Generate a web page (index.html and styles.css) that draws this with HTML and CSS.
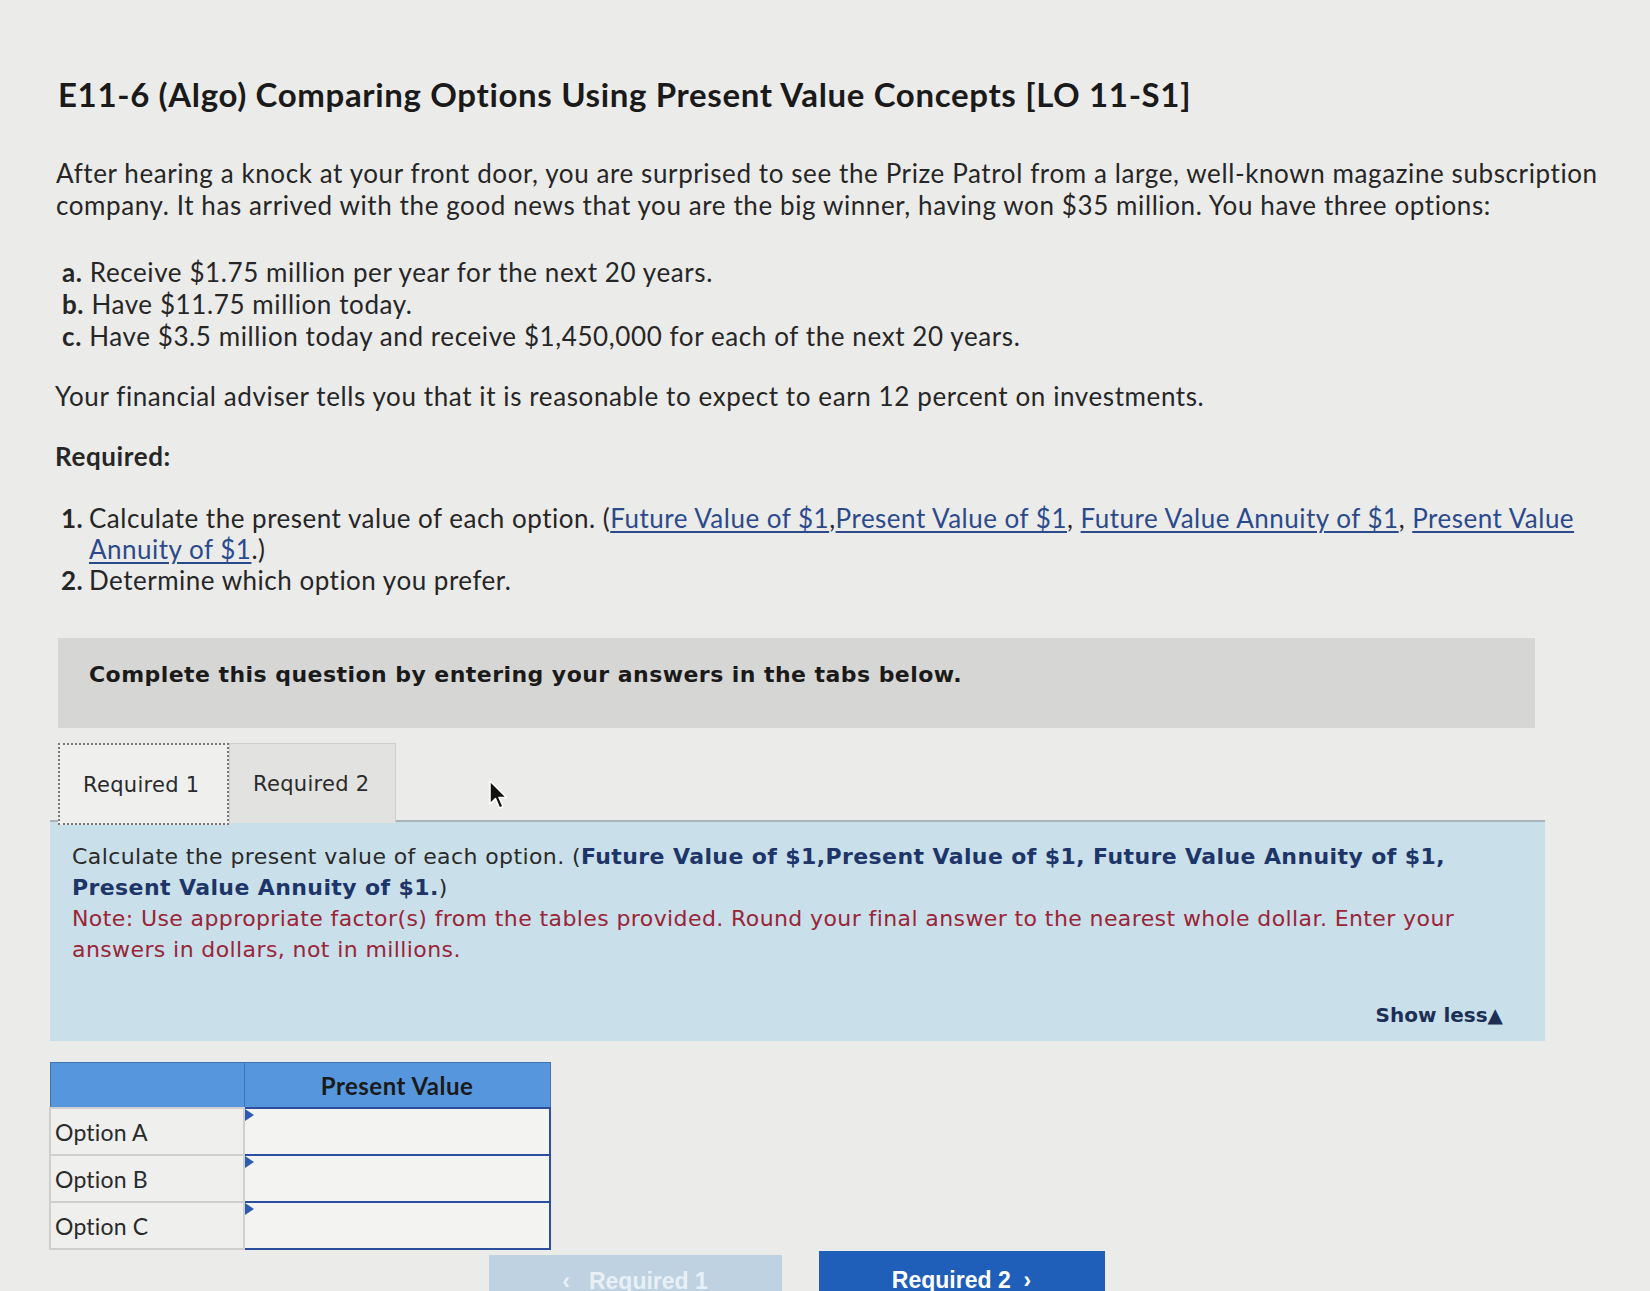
FILE: index.html
```html
<!DOCTYPE html>
<html>
<head>
<meta charset="utf-8">
<link rel="stylesheet" href="styles.css">
</head>
<body>
<div class="page">
  <h1 class="title">E11-6 (Algo) Comparing Options Using Present Value Concepts [LO 11-S1]</h1>
  <p class="intro">After hearing a knock at your front door, you are surprised to see the Prize Patrol from a large, well-known magazine subscription company. It has arrived with the good news that you are the big winner, having won $35 million. You have three options:</p>
  <ul class="options">
    <li><b>a.</b> Receive $1.75 million per year for the next 20 years.</li>
    <li><b>b.</b> Have $11.75 million today.</li>
    <li><b>c.</b> Have $3.5 million today and receive $1,450,000 for each of the next 20 years.</li>
  </ul>
  <p class="adviser">Your financial adviser tells you that it is reasonable to expect to earn 12 percent on investments.</p>
  <p class="req">Required:</p>
  <ol class="reqlist">
    <li><b class="num">1.</b><span>Calculate the present value of each option. (<a>Future Value of $1</a>,<a>Present Value of $1</a>, <a>Future Value Annuity of $1</a>, <a>Present Value Annuity of $1</a>.)</span></li>
    <li><b class="num">2.</b><span>Determine which option you prefer.</span></li>
  </ol>
  <div class="complete">Complete this question by entering your answers in the tabs below.</div>
  <div class="tabs">
    <div class="tab active">Required 1</div>
    <div class="tab">Required 2</div>
  </div>
  <div class="panel">
    <p class="ptext">Calculate the present value of each option. (<b>Future Value of $1,Present Value of $1, Future Value Annuity of $1, Present Value Annuity of $1.</b>)<br><span class="note">Note: Use appropriate factor(s) from the tables provided. Round your final answer to the nearest whole dollar. Enter your answers in dollars, not in millions.</span></p>
    <div class="showless">Show less&#9650;</div>
  </div>
  <table class="pv">
    <tr><th class="blank"></th><th>Present Value</th></tr>
    <tr><td class="lbl">Option A</td><td class="inp"><span class="mark"></span></td></tr>
    <tr><td class="lbl">Option B</td><td class="inp"><span class="mark"></span></td></tr>
    <tr><td class="lbl">Option C</td><td class="inp"><span class="mark"></span></td></tr>
  </table>
  <div class="nav">
    <div class="btn prev">&lsaquo;&nbsp;&nbsp; Required 1</div>
    <div class="btn next">Required 2 &nbsp;&rsaquo;</div>
  </div>
</div>
<svg class="cursor" width="22" height="32" viewBox="0 0 22 32"><path d="M2 1 L2 24 L7.5 18.5 L11.5 28 L15 26.5 L11 17.5 L18.5 17.5 Z" fill="#111" stroke="#fff" stroke-width="1.5" stroke-linejoin="round"/></svg>
</body>
</html>
```
FILE: styles.css
```css
html, body {
  margin: 0;
  padding: 0;
  background: #ebebea;
}
body {
  position: relative;
  height: 1291px;
  overflow: hidden;
  font-family: Lato, "Liberation Sans", sans-serif;
  color: #262626;
}
.page {
  margin-left: 58px;
  width: 1480px;
  padding-top: 75px;
}
.title {
  margin: 0;
  font-size: 33px;
  line-height: 38px;
  letter-spacing: 0.65px;
  font-weight: 700;
  color: #1a1a1a;
}
.intro {
  margin: 44px 0 0 -2px;
  font-size: 26px;
  letter-spacing: 0.6px;
  line-height: 32px;
  width: 1570px;
}
.options {
  list-style: none;
  margin: 35px 0 0 4px;
  padding: 0;
  font-size: 26px;
  letter-spacing: 0.6px;
  line-height: 32px;
}
.options b { font-weight: 700; }
.adviser {
  margin: 28px 0 0 -3px;
  font-size: 26px;
  letter-spacing: 0.6px;
  line-height: 32px;
}
.req {
  margin: 28px 0 0 -3px;
  font-size: 26px;
  letter-spacing: 0.6px;
  line-height: 32px;
  font-weight: 700;
}
.reqlist {
  list-style: none;
  margin: 31px 0 0 3px;
  padding: 0;
  width: 1545px;
  font-size: 26px;
  letter-spacing: 0.5px;
  line-height: 31px;
}
.reqlist li {
  display: flex;
}
.reqlist .num {
  width: 28px;
  flex: none;
}
.reqlist a {
  color: #2b4a8c;
  text-decoration: underline;
  text-underline-offset: 3px;
}
.complete {
  margin-top: 42px;
  height: 90px;
  width: 1477px;
  box-sizing: border-box;
  padding: 24px 0 0 31px;
  background: #d6d6d5;
  font-family: "DejaVu Sans", Verdana, sans-serif;
  font-weight: 700;
  font-size: 22px;
  letter-spacing: 0.45px;
  color: #1a1a1a;
}
.tabs {
  display: flex;
  margin-top: 15px;
  position: relative;
  z-index: 1;
}
.tab {
  height: 80px;
  box-sizing: border-box;
  padding: 28px 0 0 23px;
  font-family: "DejaVu Sans", Verdana, sans-serif;
  font-size: 21px;
  letter-spacing: 0.3px;
  color: #2a2a2a;
}
.tab.active {
  width: 171px;
  background: #efefee;
  border: 2px dotted #777;
  height: 82px;
}
.tab:not(.active) {
  width: 167px;
  background: #e2e2e1;
  border: 1px solid #cfcfcf;
  border-bottom: none;
}
.panel {
  margin: -5px 0 0 -8px;
  width: 1495px;
  height: 221px;
  box-sizing: border-box;
  background: #c9dfe9;
  border-top: 2px solid #a9b3b8;
  padding: 19px 42px 0 22px;
  font-family: "DejaVu Sans", Verdana, sans-serif;
  font-size: 22px;
  letter-spacing: 0.4px;
  color: #2a2a2a;
}
.ptext {
  margin: 0;
  line-height: 31px;
}
.ptext b { color: #1d3568; }
.note { color: #9a2438; }
.showless {
  text-align: right;
  margin-top: 38px;
  font-weight: 700;
  font-size: 20px;
  letter-spacing: 0;
  color: #1d2f55;
}
.pv {
  margin: 21px 0 0 -9px;
  border-collapse: collapse;
  font-size: 23px;
  letter-spacing: 0.2px;
}
.pv th {
  height: 44px;
  background: #5596dc;
  border: 1px solid #3f74b0;
  font-weight: 700;
  font-size: 24px;
  letter-spacing: 0.5px;
  color: #1a1a1a;
  padding: 0;
  text-align: center;
}
.pv th.blank { width: 193px; }
.pv td {
  height: 45px;
  padding: 0;
}
.pv td.lbl {
  background: #efefee;
  border: 2px solid #cfcfcf;
  padding-left: 4px;
  color: #2a2a2a;
}
.pv td.inp {
  width: 304px;
  background: #f3f3f2;
  border: 2px solid #2b4f9e;
  vertical-align: top;
}
.mark {
  display: block;
  width: 0;
  height: 0;
  border-top: 6px solid transparent;
  border-bottom: 6px solid transparent;
  border-left: 9px solid #2d5bb0;
}
.nav {
  display: flex;
  justify-content: center;
  gap: 37px;
  margin-top: 1px;
  width: 1477px;
}
.btn {
  height: 60px;
  box-sizing: border-box;
  padding-top: 16px;
  text-align: center;
  font-family: "Liberation Sans", Arial, sans-serif;
  font-weight: 700;
  font-size: 23px;
  color: #fff;
}
.btn.prev {
  width: 293px;
  margin-top: 4px;
  padding-top: 13px;
  background: #bed2e2;
  color: #e9f0f5;
}
.btn.next {
  width: 286px;
  background: #1f5fba;
}
.cursor {
  position: absolute;
  left: 488px;
  top: 780px;
}
```
